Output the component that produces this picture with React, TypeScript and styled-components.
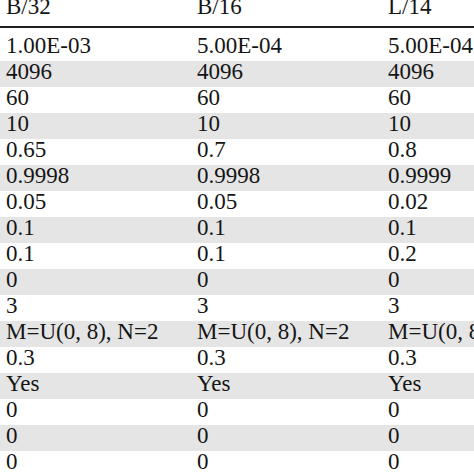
import React from "react";
import styled, { createGlobalStyle } from "styled-components";

const Global = createGlobalStyle`
  html, body {
    margin: 0;
    padding: 0;
    background: #ffffff;
    overflow: hidden;
  }
  body {
    width: 474px;
    height: 474px;
  }
`;

const Table = styled.div`
  width: 474px;
  font-family: "Liberation Serif", "Times New Roman", serif;
  font-size: 23px;
  color: #151515;
  white-space: nowrap;
  overflow: hidden;
`;

const HeaderRow = styled.div`
  display: grid;
  grid-template-columns: 191px 191px 1fr;
  margin-top: -4px;
  padding-bottom: 8px;
  border-bottom: 2px solid #1e1e1e;
`;

const Body = styled.div`
  margin-top: 7px;
  display: flex;
  flex-direction: column;
`;

const Row = styled.div<{ $shaded: boolean }>`
  display: grid;
  grid-template-columns: 191px 191px 1fr;
  height: 26px;
  background: ${(p) => (p.$shaded ? "#e5e5e5" : "transparent")};
`;

const Cell = styled.div`
  padding-left: 6px;
  line-height: 22px;
  padding-bottom: 4px;
  min-width: 0;
`;

const HeadCell = styled(Cell)`
  padding-bottom: 0;
`;

const headers = ["B/32", "B/16", "L/14"];

const rows: string[][] = [
  ["1.00E-03", "5.00E-04", "5.00E-04"],
  ["4096", "4096", "4096"],
  ["60", "60", "60"],
  ["10", "10", "10"],
  ["0.65", "0.7", "0.8"],
  ["0.9998", "0.9998", "0.9999"],
  ["0.05", "0.05", "0.02"],
  ["0.1", "0.1", "0.1"],
  ["0.1", "0.1", "0.2"],
  ["0", "0", "0"],
  ["3", "3", "3"],
  ["M=U(0, 8), N=2", "M=U(0, 8), N=2", "M=U(0, 8), N=2"],
  ["0.3", "0.3", "0.3"],
  ["Yes", "Yes", "Yes"],
  ["0", "0", "0"],
  ["0", "0", "0"],
  ["0", "0", "0"],
];

export default function App() {
  return (
    <>
      <Global />
      <Table>
        <HeaderRow>
          {headers.map((h) => (
            <HeadCell key={h}>{h}</HeadCell>
          ))}
        </HeaderRow>
        <Body>
          {rows.map((r, i) => (
            <Row key={i} $shaded={i % 2 === 1}>
              {r.map((c, j) => (
                <Cell key={j}>{c}</Cell>
              ))}
            </Row>
          ))}
        </Body>
      </Table>
    </>
  );
}
